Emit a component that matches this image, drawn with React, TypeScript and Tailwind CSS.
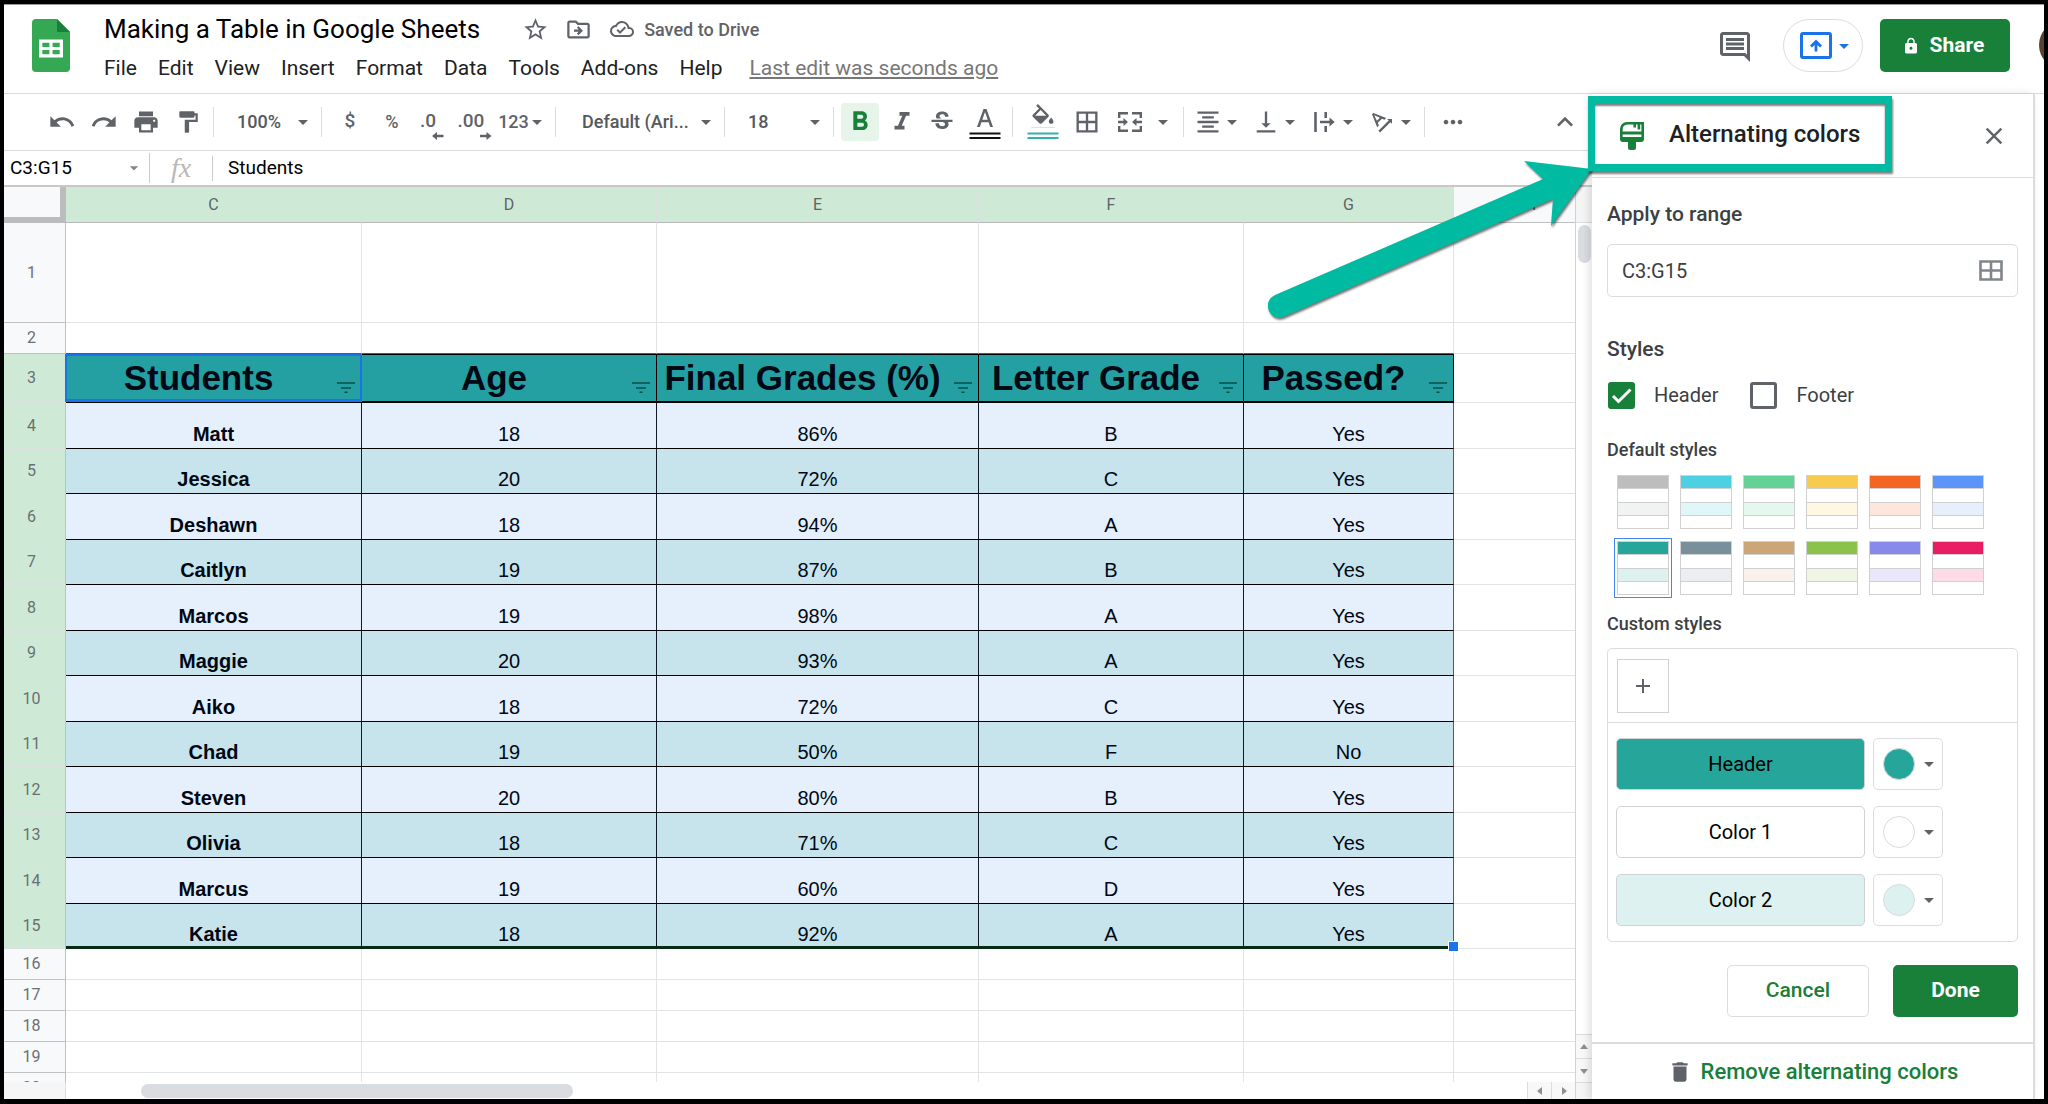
import type { ReactNode } from "react";
import {
  MdArrowDropDown,
  MdBorderAll,
  MdClose,
  MdDelete,
  MdFormatAlignCenter,
  MdFormatBold,
  MdFormatColorFill,
  MdFormatItalic,
  MdFormatPaint,
  MdKeyboardArrowUp,
  MdLock,
  MdMoreHoriz,
  MdOutlineCloudDone,
  MdOutlineComment,
  MdOutlineDriveFileMove,
  MdPrint,
  MdRedo,
  MdStarBorder,
  MdStrikethroughS,
  MdTextRotationAngleup,
  MdUndo,
  MdVerticalAlignBottom,
  MdAdd,
} from "react-icons/md";

const menus = ["File", "Edit", "View", "Insert", "Format", "Data", "Tools", "Add-ons", "Help"];

const columns = ["C", "D", "E", "F", "G"];

const headings = ["Students", "Age", "Final Grades (%)", "Letter Grade", "Passed?"];

const students = [
  ["Matt", "18", "86%", "B", "Yes"],
  ["Jessica", "20", "72%", "C", "Yes"],
  ["Deshawn", "18", "94%", "A", "Yes"],
  ["Caitlyn", "19", "87%", "B", "Yes"],
  ["Marcos", "19", "98%", "A", "Yes"],
  ["Maggie", "20", "93%", "A", "Yes"],
  ["Aiko", "18", "72%", "C", "Yes"],
  ["Chad", "19", "50%", "F", "No"],
  ["Steven", "20", "80%", "B", "Yes"],
  ["Olivia", "18", "71%", "C", "Yes"],
  ["Marcus", "19", "60%", "D", "Yes"],
  ["Katie", "18", "92%", "A", "Yes"],
];

const palettes = [
  { name: "Grey", head: "bg-[#bdbdbd]", band: "bg-[#f1f3f2]" },
  { name: "Cyan", head: "bg-[#4dd0e1]", band: "bg-[#e0f7fa]" },
  { name: "Green", head: "bg-[#63d297]", band: "bg-[#e5f8ee]" },
  { name: "Yellow", head: "bg-[#f7cb4d]", band: "bg-[#fef8e3]" },
  { name: "Orange", head: "bg-[#f46524]", band: "bg-[#ffe6dd]" },
  { name: "Blue", head: "bg-[#5b95f9]", band: "bg-[#e6effc]" },
  { name: "Teal", head: "bg-[#26a69a]", band: "bg-[#ddf2f0]" },
  { name: "Slate", head: "bg-[#78909c]", band: "bg-[#ebeff1]" },
  { name: "Brown", head: "bg-[#cca677]", band: "bg-[#f8f2eb]" },
  { name: "Light green", head: "bg-[#8bc34a]", band: "bg-[#eef7e3]" },
  { name: "Violet", head: "bg-[#8989eb]", band: "bg-[#e8e7fc]" },
  { name: "Pink", head: "bg-[#e91d63]", band: "bg-[#fddce8]" },
];

const customColors = [
  { label: "Header", fill: "bg-[#26a69a]" },
  { label: "Color 1", fill: "bg-white" },
  { label: "Color 2", fill: "bg-[#ddf2f0]" },
];

function SheetsLogo() {
  return (
    <svg viewBox="0 0 38 53" className="h-[53px] w-[38px] shrink-0" aria-hidden="true">
      <path d="M4 0H25L38 13V49a4 4 0 0 1-4 4H4a4 4 0 0 1-4-4V4a4 4 0 0 1 4-4z" fill="#34a853" />
      <path d="M25 0L38 13H25z" fill="#188038" />
      <path
        d="M7 20.500H31V38.500H7zM10.300 23.800V28H17.400V23.800zM20.600 23.800V28H27.700V23.800zM10.300 31V35.200H17.400V31zM20.600 31V35.200H27.700V31z"
        fill="#fff"
        fillRule="evenodd"
      />
    </svg>
  );
}

function Separator() {
  return <div className="mx-1 h-[30px] w-px shrink-0 bg-[#dadce0]" />;
}

function Caret() {
  return <MdArrowDropDown className="size-6 shrink-0" aria-hidden="true" />;
}

function Tool({ label, width, children }: { label: string; width: string; children: ReactNode }) {
  return (
    <button type="button" aria-label={label} className={`flex h-10 shrink-0 items-center justify-center ${width}`}>
      {children}
    </button>
  );
}

function ComboTool({ label, children }: { label: string; children: ReactNode }) {
  return (
    <button type="button" aria-label={label} className="flex h-10 w-[58px] shrink-0 items-center justify-start pl-1">
      <span className="flex w-8 justify-center">{children}</span>
      <span className="-ml-1 flex w-6">
        <Caret />
      </span>
    </button>
  );
}

function Picker({ label, value, width, pad }: { label: string; value: string; width: string; pad: string }) {
  return (
    <div className={`relative flex shrink-0 items-center ${width}`}>
      <select
        aria-label={label}
        className={`h-9 w-full appearance-none bg-transparent text-[18px] font-medium text-[#55585c] ${pad}`}
      >
        <option>{value}</option>
      </select>
      <MdArrowDropDown className="pointer-events-none absolute right-0.5 size-6" aria-hidden="true" />
    </div>
  );
}

function DecimalArrow({ left }: { left?: boolean }) {
  return (
    <svg viewBox="0 0 12 8" className="absolute -right-2 -bottom-1 h-2 w-3" aria-hidden="true">
      <path
        d={left ? "M0 4L5 0V2.800H11.500V5.200H5V8z" : "M11.500 4L6.500 0V2.800H0V5.200H6.500V8z"}
        fill="#5f6368"
      />
    </svg>
  );
}

function Toolbar() {
  return (
    <div
      role="toolbar"
      className="flex h-[57px] shrink-0 items-center border-b border-[#dadce0] pb-px pl-[37px] text-[#5f6368]"
    >
      <Tool label="Undo" width="w-[42px]">
        <MdUndo className="size-7" />
      </Tool>
      <Tool label="Redo" width="w-[42px]">
        <MdRedo className="size-7" />
      </Tool>
      <Tool label="Print" width="w-[42px]">
        <MdPrint className="size-7" />
      </Tool>
      <Tool label="Paint format" width="w-[42px]">
        <MdFormatPaint className="size-[26px]" />
      </Tool>
      <Separator />
      <Picker label="Zoom" value="100%" width="w-[99px]" pad="pl-[19px]" />
      <Separator />
      <Tool label="Format as currency" width="w-[48px]">
        <span className="text-[19px] font-medium">$</span>
      </Tool>
      <Tool label="Format as percent" width="w-[36px]">
        <span className="text-[18px] font-medium">%</span>
      </Tool>
      <Tool label="Decrease decimal places" width="w-[36px]">
        <span className="relative text-[19px] font-medium">
          .0
          <DecimalArrow left />
        </span>
      </Tool>
      <Tool label="Increase decimal places" width="w-[50px]">
        <span className="relative text-[19px] font-medium">
          .00
          <DecimalArrow />
        </span>
      </Tool>
      <Tool label="More formats" width="w-[55px]">
        <span className="text-[18px] font-medium">123</span>
        <span className="-ml-1">
          <Caret />
        </span>
      </Tool>
      <Separator />
      <Picker label="Font" value="Default (Ari..." width="w-[160px]" pad="pl-[22px]" />
      <Separator />
      <Picker label="Font size" value="18" width="w-[100px]" pad="pl-[19px]" />
      <Separator />
      <button
        type="button"
        aria-label="Bold"
        className="mx-[3px] flex size-[38px] shrink-0 items-center justify-center rounded bg-[#e6f4ea] text-[#188038]"
      >
        <MdFormatBold className="size-8" />
      </button>
      <Tool label="Italic" width="w-[40px]">
        <MdFormatItalic className="size-[30px]" />
      </Tool>
      <Tool label="Strikethrough" width="w-[40px]">
        <MdStrikethroughS className="size-[28px]" />
      </Tool>
      <Tool label="Text color" width="w-[46px]">
        <svg viewBox="0 0 32 36" className="h-9 w-8" aria-hidden="true">
          <path d="M14.500 5H17.500L24 23H21.200L19.600 18.300H12.400L10.800 23H8zM13.300 15.800H18.700L16 8z" fill="#5f6368" />
          <path d="M.5 29.500H31.500M.5 34H31.500" stroke="#111" strokeWidth="2" />
        </svg>
      </Tool>
      <Separator />
      <Tool label="Fill color" width="w-[52px]">
        <span className="relative flex h-9 w-8 justify-center">
          <MdFormatColorFill className="h-[28px] w-[28px] [clip-path:inset(0_0_15%_0)]" />
          <svg viewBox="0 0 32 8" className="absolute bottom-0 h-2 w-8" aria-hidden="true">
            <path d="M.5 1.500H31.500M.5 6H31.500" stroke="#35b0a6" strokeWidth="2" />
          </svg>
        </span>
      </Tool>
      <Tool label="Borders" width="w-[36px]">
        <MdBorderAll className="size-[28px]" />
      </Tool>
      <button type="button" aria-label="Merge cells" className="flex h-10 w-[74px] shrink-0 items-center pl-[13px]">
        <svg viewBox="0 0 24 20" className="h-5 w-6" fill="none" stroke="currentColor" strokeWidth="2.400" aria-hidden="true">
          <path d="M1.200 6V1.200H10M14 1.200H22.800V6M1.200 14V18.800H10M14 18.800H22.800V14M0 10H6M24 10H18" />
          <path d="M5.500 6L10 10L5.500 14zM18.500 6L14 10L18.500 14z" fill="currentColor" stroke="none" />
        </svg>
        <span className="ml-[9px]">
          <Caret />
        </span>
      </button>
      <Separator />
      <ComboTool label="Horizontal align">
        <MdFormatAlignCenter className="size-7" />
      </ComboTool>
      <ComboTool label="Vertical align">
        <MdVerticalAlignBottom className="size-[28px]" />
      </ComboTool>
      <ComboTool label="Text wrapping">
        <svg viewBox="0 0 21 20" className="h-5 w-[21px]" fill="none" stroke="currentColor" strokeWidth="2.600" aria-hidden="true">
          <path d="M1.500 0V20M11.700 0V6M11.700 14V20M6 10H16" />
          <path d="M15.500 5.500L20.700 10L15.500 14.500z" fill="currentColor" stroke="none" />
        </svg>
      </ComboTool>
      <ComboTool label="Text rotation">
        <MdTextRotationAngleup className="size-[28px]" />
      </ComboTool>
      <Separator />
      <Tool label="More" width="w-[48px]">
        <MdMoreHoriz className="size-7" />
      </Tool>
      <button type="button" aria-label="Hide the menus" className="ml-auto flex h-10 w-[54px] items-center justify-center">
        <MdKeyboardArrowUp className="size-8" />
      </button>
    </div>
  );
}

function TopBar() {
  return (
    <header className="flex h-[90px] shrink-0 items-start overflow-hidden border-t border-b border-t-[#999] border-b-[#dadce0] pt-3.5 pl-7">
      <SheetsLogo />
      <div className="ml-[34px] min-w-0 flex-1">
        <div className="-mt-2 flex h-9 items-center whitespace-nowrap text-[#5f6368]">
          <h1 className="text-[26px] leading-9 text-black">Making a Table in Google Sheets</h1>
          <button type="button" aria-label="Star" className="ml-[42px]">
            <MdStarBorder className="size-[27px]" />
          </button>
          <button type="button" aria-label="Move" className="ml-4">
            <MdOutlineDriveFileMove className="size-[27px]" />
          </button>
          <button type="button" className="ml-[18px] flex items-center gap-2.5 text-[18px] font-medium">
            <MdOutlineCloudDone className="size-6" aria-hidden="true" />
            Saved to Drive
          </button>
        </div>
        <nav className="mt-1.5 flex h-8 items-center gap-[21px] whitespace-nowrap text-[21px] text-[#202124]">
          {menus.map((menu) => (
            <button type="button" key={menu}>
              {menu}
            </button>
          ))}
          <a href="#history" className="ml-1.5 text-[#777] underline underline-offset-2">
            Last edit was seconds ago
          </a>
        </nav>
      </div>
      <button type="button" aria-label="Comments" className="mt-2.5 text-[#5f6368]">
        <MdOutlineComment className="size-9" />
      </button>
      <button
        type="button"
        aria-label="Present"
        className="ml-[30px] flex h-[53px] w-20 items-center justify-center rounded-full border border-[#dadce0] pl-2.5 text-[#1a73e8]"
      >
        <svg viewBox="0 0 32 28" className="h-7 w-8 shrink-0" aria-hidden="true">
          <rect x="1.500" y="1.500" width="29" height="24" rx="1.500" fill="none" stroke="currentColor" strokeWidth="3" />
          <path d="M16 7.500L22 13.500L20 15.500L17.400 13V19.500H14.600V13L12 15.500L10 13.500z" fill="currentColor" />
        </svg>
        <Caret />
      </button>
      <button
        type="button"
        className="ml-[17px] flex h-[53px] w-[130px] items-center justify-center gap-2.5 rounded-[5px] bg-[#188038] pr-1 text-[21px] font-bold text-white"
      >
        <MdLock className="size-[18px]" aria-hidden="true" />
        Share
      </button>
      <div className="ml-[29px] w-[5px] overflow-hidden">
        <div className="mt-0.5 size-12 rounded-full bg-[#5b4030]" />
      </div>
    </header>
  );
}

function FormulaBar() {
  return (
    <div className="flex h-[36px] shrink-0 items-center border-b-2 border-[#c8c8c8] text-[19px] text-black">
      <input aria-label="Name box" defaultValue="C3:G15" className="w-[120px] bg-transparent pl-1.5 outline-none" />
      <button type="button" aria-label="Named ranges" className="flex w-[25px] text-[#80868b]">
        <MdArrowDropDown className="size-5" />
      </button>
      <div className="h-[30px] w-px bg-[#c8cacc]" />
      <span className="w-[62px] text-center font-['Liberation_Serif',serif] text-[28px] leading-7 text-[#b8b8b8] italic">fx</span>
      <div className="h-[25px] w-px bg-[#c8cacc]" />
      <input aria-label="Formula" defaultValue="Students" className="min-w-0 flex-1 bg-transparent pl-[15px] outline-none" />
    </div>
  );
}

function FilterButton({ column }: { column: string }) {
  return (
    <button type="button" aria-label={`Filter ${column}`} className="absolute right-1.5 bottom-2">
      <svg viewBox="0 0 18 11" className="h-[11px] w-[18px]" aria-hidden="true">
        <path d="M0 1H18M4 6H14M7.500 10.200H10.500" stroke="#0b4f4a" strokeWidth="1.500" />
      </svg>
    </button>
  );
}

function RowNumber({ n, selected }: { n: number; selected?: boolean }) {
  return (
    <th
      scope="row"
      className={`border-r border-b border-r-[#c0c0c0] p-0 pr-1.5 font-[Roboto,sans-serif] text-[16px] font-normal text-[#6b6f74] ${
        selected ? "border-b-[#dcdfe0] bg-[#ceead6]" : "border-b-[#c0c0c0] bg-[#f8f9fa]"
      }`}
    >
      {n}
    </th>
  );
}

function EmptyRow({ n, height, active }: { n: number; height: string; active?: boolean }) {
  return (
    <tr className={height}>
      <RowNumber n={n} />
      {columns.map((c) => (
        <td key={c} className={`border-r border-b border-r-[#e2e3e3] ${active ? "border-b-[#188038]" : "border-b-[#e2e3e3]"}`} />
      ))}
      <td className="border-b border-[#e2e3e3]" />
    </tr>
  );
}

function Sheet() {
  return (
    <div className="min-h-0 flex-1 overflow-hidden">
      <table className="w-full table-fixed border-separate border-spacing-0">
        <colgroup>
          <col className="w-[62px]" />
          <col className="w-[296px]" />
          <col className="w-[295px]" />
          <col className="w-[322px]" />
          <col className="w-[265px]" />
          <col className="w-[210px]" />
          <col />
        </colgroup>
        <thead>
          <tr className="h-[36px] text-[16px] text-[#5f6368]">
            <td className="border-r-[6px] border-b-[6px] border-[#bcbcbc] bg-[#f8f9fa]" />
            {columns.map((c) => (
              <th key={c} scope="col" className="border-r border-b border-r-[#dcdfe0] border-b-[#b8b8b8] bg-[#ceead6] p-0 font-normal">
                {c}
              </th>
            ))}
            <th scope="col" className="border-b border-b-[#c0c0c0] bg-[#f8f9fa] p-0 pl-8 font-normal">
              H
            </th>
          </tr>
        </thead>
        <tbody className="font-['Liberation_Sans',Arial,sans-serif] text-[#000814]">
          <EmptyRow n={1} height="h-[100px]" />
          <EmptyRow n={2} height="h-[31px]" active />
          <tr className="h-[49px]">
            <RowNumber n={3} selected />
            {headings.map((h, i) => (
              <td
                key={h}
                className="relative border-t border-r border-b-2 border-black bg-[#24a0a3] p-0 pr-[30px] text-center text-[35px] leading-[44px] font-bold whitespace-nowrap"
              >
                {h}
                <FilterButton column={h} />
                {i === 0 && <span className="pointer-events-none absolute -inset-px border-2 border-b-[3px] border-[#1a73e8]" />}
              </td>
            ))}
            <td className="border-b border-[#e2e3e3]" />
          </tr>
          {students.map((row, r) => {
            const last = r === students.length - 1;
            return (
              <tr key={row[0]} className={r % 2 === 0 ? "h-[46px]" : "h-[45px]"}>
                <RowNumber n={r + 4} selected />
                {row.map((cell, c) => (
                  <td
                    key={c}
                    className={`relative border-r p-0 text-center align-bottom text-[20px] leading-6 ${
                      r % 2 === 0 ? "bg-[#e6effc]" : "bg-[#c7e4ed]"
                    } ${last ? "border-b-[3px] border-b-[#062d14]" : "border-b border-b-black pb-0.5"} ${
                      c === 4 ? "border-r-[#188038]" : "border-r-[#111a26]"
                    } ${c === 0 ? "font-bold" : ""}`}
                  >
                    {cell}
                    {last && c === 4 && (
                      <span className="absolute -right-1.5 -bottom-1.5 z-10 size-[11px] border border-white bg-[#1a73e8]" />
                    )}
                  </td>
                ))}
                <td className="border-b border-[#e2e3e3]" />
              </tr>
            );
          })}
          {[16, 17, 18, 19, 20].map((n) => (
            <EmptyRow key={n} n={n} height="h-[31px]" />
          ))}
        </tbody>
      </table>
    </div>
  );
}

function ScrollArrow({ label, d, className }: { label: string; d: string; className: string }) {
  return (
    <button type="button" aria-label={label} className={`flex items-center justify-center border-[#dadce0] bg-[#f8f8f8] ${className}`}>
      <svg viewBox="0 0 8 8" className="size-2" aria-hidden="true">
        <path d={d} fill="#8f8f8f" />
      </svg>
    </button>
  );
}

function Workspace() {
  return (
    <div className="flex min-h-0 flex-1">
      <div className="flex min-w-0 flex-1 flex-col">
        <Sheet />
        <div className="flex h-[17px] shrink-0">
          <div className="w-[62px] border-r border-[#dcdcdc] bg-[#f6f6f6]" />
          <div className="flex flex-1 items-center pl-[75px]">
            <div className="h-3.5 w-[432px] rounded-full bg-[#d9dce0]" />
          </div>
          <ScrollArrow label="Scroll left" d="M6 0V8L1 4z" className="w-6 border-l" />
          <ScrollArrow label="Scroll right" d="M2 0V8L7 4z" className="w-6 border-l" />
        </div>
      </div>
      <div className="flex w-[17px] shrink-0 flex-col border-l border-[#d0d2d4]">
        <div className="h-9 border-b border-[#dadce0] bg-[#f5f5f5]" />
        <div className="flex-1 pt-0.5 pl-0.5">
          <div className="h-[38px] w-[13px] rounded-full bg-[#d9dce0]" />
        </div>
        <ScrollArrow label="Scroll up" d="M0 6H8L4 1z" className="h-6 border-t" />
        <ScrollArrow label="Scroll down" d="M0 2H8L4 7z" className="h-6 border-t" />
        <div className="h-[17px] border-t border-[#dadce0] bg-[#f5f5f5]" />
      </div>
    </div>
  );
}

function Callout() {
  return (
    <>
      <svg
        viewBox="0 0 336 164"
        className="pointer-events-none absolute top-[63px] right-full z-20 h-[164px] w-[336px] drop-shadow-[1px_2px_1px_rgba(0,0,0,0.55)]"
        aria-hidden="true"
      >
        <path
          d="M19 138L287 22L268 4L336 12L295 69L297 42L27 160Q18 163 13 154Q9 143 19 138z"
          fill="#00bba1"
        />
      </svg>
      <div className="pointer-events-none absolute top-[2px] -left-1 z-30 h-[75px] w-[304px] border-[7px] border-[#00bba1] shadow-[1px_3px_2px_rgba(0,0,0,0.5),inset_0_3px_2px_rgba(0,0,0,0.5)]" />
    </>
  );
}

function BrushIcon() {
  return (
    <svg viewBox="0 0 24 28" className="h-7 w-6 shrink-0" aria-hidden="true">
      <path
        d="M7 0H24V17a3 3 0 0 1-3 3H16V26a2 2 0 0 1-2 2H10a2 2 0 0 1-2-2V20H3a3 3 0 0 1-3-3V7a7 7 0 0 1 7-7zM7.500 2.600Q2.600 3 2.600 8V9.500H21.400V2.600H20.200V7.500H17.600V2.600H16V5.500H13.400V2.600zM2.600 12.500V15H21.400V12.500z"
        fill="#188038"
        fillRule="evenodd"
      />
    </svg>
  );
}

function Check({ id, label, checked }: { id: string; label: string; checked?: boolean }) {
  return (
    <div className="flex items-center">
      <span className="relative flex size-[27px]">
        <input
          id={id}
          type="checkbox"
          defaultChecked={checked}
          className="peer size-full appearance-none rounded-[3px] border-[3px] border-[#5f6368] checked:border-[#188038] checked:bg-[#188038]"
        />
        <svg viewBox="0 0 27 27" className="pointer-events-none absolute inset-0 hidden peer-checked:block" aria-hidden="true">
          <path d="M5 14L10.500 19.500L22.500 7.500" fill="none" stroke="#fff" strokeWidth="3" />
        </svg>
      </span>
      <label htmlFor={id} className="pl-[19px] text-[20px] text-[#3c4043]">
        {label}
      </label>
    </div>
  );
}

function SidePanel() {
  return (
    <aside className="relative z-10 flex w-[443px] shrink-0 flex-col border-r-2 border-[#dadce0] bg-white text-[#3c4043] shadow-[-3px_0_8px_rgba(0,0,0,0.12)]">
      <div className="relative flex h-[84px] shrink-0 items-center border-b border-[#dadce0] pr-[25px] pl-7">
        <Callout />
        <BrushIcon />
        <h2 className="ml-[25px] flex-1 pb-1 text-[24px] leading-8 font-medium text-[#202124]">Alternating colors</h2>
        <button type="button" aria-label="Close" className="text-[#5f6368]">
          <MdClose className="size-7" />
        </button>
      </div>
      <div className="flex flex-1 flex-col px-[15px]">
        <label htmlFor="range" className="mt-[22px] text-[21px] leading-7 font-medium">
          Apply to range
        </label>
        <div className="mt-4 flex h-[53px] items-center rounded-[5px] border border-[#dadce0] px-3.5">
          <input id="range" defaultValue="C3:G15" className="min-w-0 flex-1 bg-transparent text-[20px] outline-none" />
          <button type="button" aria-label="Select data range">
            <svg viewBox="0 0 24 21" className="h-[21px] w-6" fill="none" stroke="#80868b" strokeWidth="2.600" aria-hidden="true">
              <path d="M1.500 1.500H22.500V19.500H1.500zM12 1.500V19.500M1.500 10.500H22.500" />
            </svg>
          </button>
        </div>
        <h3 className="mt-[38px] text-[21px] leading-7 font-medium">Styles</h3>
        <div className="mt-4 flex h-8 items-center gap-8 pl-px">
          <Check id="header" label="Header" checked />
          <Check id="footer" label="Footer" />
        </div>
        <h3 className="mt-[27px] text-[18px] leading-6 font-medium">Default styles</h3>
        <div className="mt-2.5 flex flex-wrap gap-x-[5px] gap-y-1.5 pl-[7px]">
          {palettes.map((p, i) => (
            <button
              type="button"
              key={p.name}
              aria-label={p.name}
              aria-pressed={i === 6}
              className={`h-[60px] w-[58px] border p-0.5 ${i === 6 ? "border-[#4285f4]" : "border-transparent"}`}
            >
              <span className="grid h-full grid-rows-4 gap-px border border-[#d0d0d0] bg-[#d0d0d0]">
                <span className={p.head} />
                <span className="bg-white" />
                <span className={p.band} />
                <span className="bg-white" />
              </span>
            </button>
          ))}
        </div>
        <h3 className="mt-3.5 text-[18px] leading-6 font-medium">Custom styles</h3>
        <div className="mt-3 rounded-[5px] border border-[#dadce0]">
          <div className="border-b border-[#dadce0] pt-2.5 pb-[9px] pl-[9px]">
            <button
              type="button"
              aria-label="Add custom style"
              className="flex h-[54px] w-[52px] items-center justify-center border border-[#d0d0d0] text-[#5f6368]"
            >
              <MdAdd className="size-6" />
            </button>
          </div>
          <div className="flex flex-col gap-4 py-[15px] pl-2">
            {customColors.map((c) => (
              <div key={c.label} className="flex gap-2">
                <button
                  type="button"
                  className={`h-[52px] w-[249px] rounded-[5px] border border-[#d0d2d4] text-[20px] text-black ${c.fill}`}
                >
                  {c.label}
                </button>
                <button
                  type="button"
                  aria-label={`${c.label} color`}
                  className="flex h-[52px] w-[70px] items-center gap-0.5 rounded-[5px] border border-[#dadce0] pl-[9px] text-[#5f6368]"
                >
                  <span className={`size-8 shrink-0 rounded-full border border-[#d8dadd] ${c.fill}`} />
                  <Caret />
                </button>
              </div>
            ))}
          </div>
        </div>
        <div className="mt-[23px] flex justify-end gap-6 text-[21px] font-medium">
          <button type="button" className="h-[52px] w-[142px] rounded-[5px] border border-[#dadce0] text-[#188038]">
            Cancel
          </button>
          <button type="button" className="h-[52px] w-[125px] rounded-[5px] bg-[#188038] font-bold text-white">
            Done
          </button>
        </div>
      </div>
      <div className="flex h-[57px] shrink-0 items-center justify-center border-t-2 border-[#dadce0]">
        <button type="button" className="flex items-center gap-2 text-[22px] font-medium text-[#188038]">
          <MdDelete className="size-[26px] text-[#5f6368]" aria-hidden="true" />
          Remove alternating colors
        </button>
      </div>
    </aside>
  );
}

export default function App() {
  return (
    <div className="flex h-screen flex-col overflow-hidden border-4 border-b-[5px] border-black bg-white font-[Roboto,sans-serif]">
      <TopBar />
      <div className="flex min-h-0 flex-1">
        <main className="flex min-w-0 flex-1 flex-col">
          <Toolbar />
          <FormulaBar />
          <Workspace />
        </main>
        <SidePanel />
        <div className="w-[9px] shrink-0" />
      </div>
    </div>
  );
}
